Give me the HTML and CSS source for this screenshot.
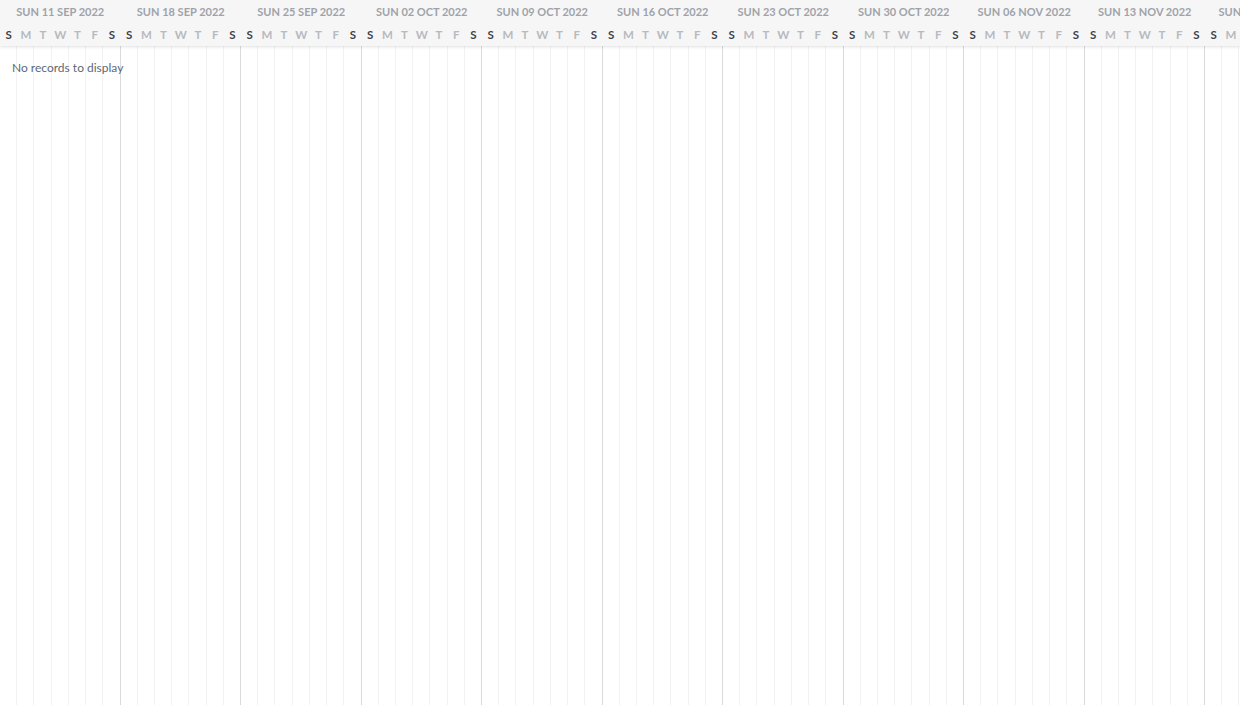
FILE: index.html
```html
<!DOCTYPE html>
<html>
<head>
<meta charset="utf-8">
<link rel="stylesheet" href="styles.css">
</head>
<body>
<div class="gantt">
  <div class="header">
    <div class="row weeks">
      <div class="week-label">SUN 11 SEP 2022</div>
      <div class="week-label">SUN 18 SEP 2022</div>
      <div class="week-label">SUN 25 SEP 2022</div>
      <div class="week-label">SUN 02 OCT 2022</div>
      <div class="week-label">SUN 09 OCT 2022</div>
      <div class="week-label">SUN 16 OCT 2022</div>
      <div class="week-label">SUN 23 OCT 2022</div>
      <div class="week-label">SUN 30 OCT 2022</div>
      <div class="week-label">SUN 06 NOV 2022</div>
      <div class="week-label">SUN 13 NOV 2022</div>
      <div class="week-label">SUN 20 NOV 2022</div>
    </div>
    <div class="row days">
      <div class="wk"><span class="d we">S</span><span class="d">M</span><span class="d">T</span><span class="d">W</span><span class="d">T</span><span class="d">F</span><span class="d we">S</span></div>
      <div class="wk"><span class="d we">S</span><span class="d">M</span><span class="d">T</span><span class="d">W</span><span class="d">T</span><span class="d">F</span><span class="d we">S</span></div>
      <div class="wk"><span class="d we">S</span><span class="d">M</span><span class="d">T</span><span class="d">W</span><span class="d">T</span><span class="d">F</span><span class="d we">S</span></div>
      <div class="wk"><span class="d we">S</span><span class="d">M</span><span class="d">T</span><span class="d">W</span><span class="d">T</span><span class="d">F</span><span class="d we">S</span></div>
      <div class="wk"><span class="d we">S</span><span class="d">M</span><span class="d">T</span><span class="d">W</span><span class="d">T</span><span class="d">F</span><span class="d we">S</span></div>
      <div class="wk"><span class="d we">S</span><span class="d">M</span><span class="d">T</span><span class="d">W</span><span class="d">T</span><span class="d">F</span><span class="d we">S</span></div>
      <div class="wk"><span class="d we">S</span><span class="d">M</span><span class="d">T</span><span class="d">W</span><span class="d">T</span><span class="d">F</span><span class="d we">S</span></div>
      <div class="wk"><span class="d we">S</span><span class="d">M</span><span class="d">T</span><span class="d">W</span><span class="d">T</span><span class="d">F</span><span class="d we">S</span></div>
      <div class="wk"><span class="d we">S</span><span class="d">M</span><span class="d">T</span><span class="d">W</span><span class="d">T</span><span class="d">F</span><span class="d we">S</span></div>
      <div class="wk"><span class="d we">S</span><span class="d">M</span><span class="d">T</span><span class="d">W</span><span class="d">T</span><span class="d">F</span><span class="d we">S</span></div>
      <div class="wk"><span class="d we">S</span><span class="d">M</span><span class="d">T</span><span class="d">W</span><span class="d">T</span><span class="d">F</span><span class="d we">S</span></div>
    </div>
  </div>
  <div class="body">
    <div class="grid">
      <div class="col"><i></i><i></i><i></i><i></i><i></i><i></i><i></i></div>
      <div class="col"><i></i><i></i><i></i><i></i><i></i><i></i><i></i></div>
      <div class="col"><i></i><i></i><i></i><i></i><i></i><i></i><i></i></div>
      <div class="col"><i></i><i></i><i></i><i></i><i></i><i></i><i></i></div>
      <div class="col"><i></i><i></i><i></i><i></i><i></i><i></i><i></i></div>
      <div class="col"><i></i><i></i><i></i><i></i><i></i><i></i><i></i></div>
      <div class="col"><i></i><i></i><i></i><i></i><i></i><i></i><i></i></div>
      <div class="col"><i></i><i></i><i></i><i></i><i></i><i></i><i></i></div>
      <div class="col"><i></i><i></i><i></i><i></i><i></i><i></i><i></i></div>
      <div class="col"><i></i><i></i><i></i><i></i><i></i><i></i><i></i></div>
      <div class="col"><i></i><i></i><i></i><i></i><i></i><i></i><i></i></div>
    </div>
    <div class="empty">No records to display</div>
  </div>
</div>
</body>
</html>
```

FILE: styles.css
```css
* { box-sizing: border-box; }
html, body { margin: 0; padding: 0; background: #fff; }
body {
  width: 1240px;
  height: 705px;
  overflow: hidden;
  font-family: Lato, "Noto Sans", sans-serif;
}
.gantt {
  display: flex;
  flex-direction: column;
  height: 705px;
  width: 1240px;
  overflow: hidden;
}
.header {
  flex: 0 0 46px;
  background: #f6f6f7;
  box-shadow: 0 1px 3px rgba(0, 0, 0, 0.12);
  position: relative;
  z-index: 2;
}
.row {
  display: flex;
  width: 1325.5px;
}
.weeks { height: 23px; }
.days { height: 23px; }
.week-label {
  flex: 0 0 120.5px;
  text-align: center;
  font-size: 11px;
  font-weight: 700;
  color: #9fa3a9;
  line-height: 23px;
  white-space: nowrap;
}
.wk {
  flex: 0 0 120.5px;
  display: flex;
}
.d {
  flex: 1 1 0;
  text-align: center;
  font-size: 11.5px;
  font-weight: 700;
  color: #b7babe;
  line-height: 24px;
}
.d.we { color: #3e4247; }
.body {
  flex: 1 1 auto;
  position: relative;
  overflow: hidden;
}
.grid {
  display: flex;
  width: 1325.5px;
  height: 100%;
}
.col {
  flex: 0 0 120.5px;
  display: flex;
  height: 100%;
}
.col i {
  flex: 1 1 0;
  border-right: 1px solid #f2f2f3;
  height: 100%;
}
.col i:last-child { border-right-color: #d9dadc; }
.empty {
  position: absolute;
  left: 12px;
  top: 13px;
  font-size: 12px;
  color: #5d6876;
  line-height: 18px;
}
```
